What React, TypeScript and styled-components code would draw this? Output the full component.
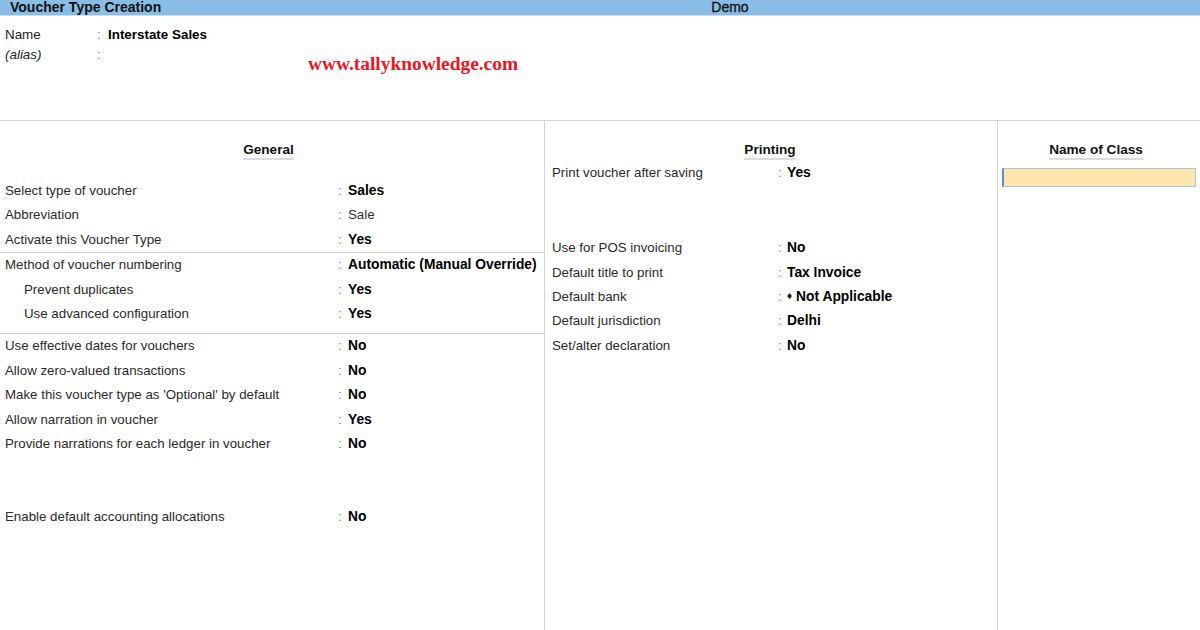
import styled, { createGlobalStyle } from 'styled-components';

const ROW = 24.4;

const GlobalStyle = createGlobalStyle`
  html, body {
    margin: 0;
    padding: 0;
    background: #fff;
  }
  body {
    font-family: "Liberation Sans", Arial, sans-serif;
    color: #222;
  }
`;

const Page = styled.div`
  width: 1200px;
  height: 630px;
  overflow: hidden;
  display: flex;
  flex-direction: column;
  position: relative;
`;

const TitleBar = styled.div`
  height: 15px;
  background: #88bde6;
  border-bottom: 1px solid #c4dff4;
  display: grid;
  grid-template-columns: 260px 1fr;
  align-items: center;
  font-size: 14px;
  line-height: 15px;
  font-weight: bold;
  color: #111;
`;

const Title = styled.div`
  padding-left: 10px;
`;

const Company = styled.div`
  text-align: center;
  font-weight: normal;
  -webkit-text-stroke: 0.3px #111;
`;

const Top = styled.div`
  height: 105px;
  border-bottom: 1px solid #d4d4d4;
  padding-top: 8px;
  box-sizing: border-box;
  position: relative;
`;

const TopRow = styled.div`
  display: grid;
  grid-template-columns: 92px 11px 1fr;
  height: 20px;
  align-items: center;
  font-size: 13.4px;
  padding-left: 5px;
`;

const TopLabel = styled.span<{ $italic?: boolean }>`
  font-style: ${(p) => (p.$italic ? 'italic' : 'normal')};
  color: #222;
`;

const Colon = styled.span`
  color: #888;
`;

const TopValue = styled.span`
  font-weight: bold;
  color: #000;
`;

const Watermark = styled.div`
  position: absolute;
  left: 308px;
  top: 37px;
  font-family: "Liberation Serif", "Times New Roman", serif;
  font-weight: bold;
  font-size: 19.4px;
  color: #f0141e;
`;

const Body = styled.div`
  flex: 1;
  display: grid;
  grid-template-columns: 544px 453px 1fr;
`;

const Column = styled.div<{ $divider?: boolean; $pad?: number; $top?: number }>`
  border-left: ${(p) => (p.$divider ? '1px solid #d4d4d4' : 'none')};
  padding-top: ${(p) => p.$top ?? 15}px;
  padding-left: ${(p) => p.$pad ?? 0}px;
  font-size: 13.3px;
`;

const Heading = styled.div<{ $gap?: number; $shift?: number }>`
  height: ${ROW}px;
  box-sizing: border-box;
  padding-top: 6px;
  padding-right: ${(p) => p.$shift ?? 0}px;
  display: flex;
  justify-content: center;
  align-items: center;
  margin-bottom: ${(p) => p.$gap ?? 0}px;
`;

const HeadingText = styled.span`
  font-weight: bold;
  font-size: 13.6px;
  color: #111;
  line-height: 16px;
  border-bottom: 2px solid #dcdcdc;
`;

const Group = styled.div<{ $line?: boolean; $bottom?: number }>`
  border-bottom: ${(p) => (p.$line ? '1px solid #cfcfcf' : 'none')};
  padding-bottom: ${(p) => p.$bottom ?? 0}px;
`;

const Row = styled.div<{ $label: number; $indent?: boolean; $colon: number }>`
  display: grid;
  grid-template-columns: ${(p) => p.$label}px ${(p) => p.$colon}px 1fr;
  height: ${ROW}px;
  align-items: center;
  white-space: nowrap;
  & > span:first-child {
    padding-left: ${(p) => (p.$indent ? 24 : 5)}px;
  }
`;

const Label = styled.span`
  color: #2a2a2a;
`;

const Value = styled.span<{ $plain?: boolean }>`
  font-weight: ${(p) => (p.$plain ? 'normal' : 'bold')};
  font-size: ${(p) => (p.$plain ? 13.3 : 13.8)}px;
  color: ${(p) => (p.$plain ? '#333' : '#000')};
`;

const Diamond = styled.span`
  font-size: 10px;
  margin-right: 4px;
  vertical-align: 2px;
`;

const Spacer = styled.div<{ $rows: number; $extra?: number }>`
  height: ${(p) => p.$rows * ROW + (p.$extra ?? 0)}px;
`;

const ClassInput = styled.div`
  margin: 8px 4px 0 4px;
  height: 17px;
  background: #fee6ad;
  border: 1px solid #a9c4e6;
  border-left: 2px solid #5b8fd0;
`;

type Item = { label: string; value: string; plain?: boolean; indent?: boolean };

const group1: Item[] = [
  { label: 'Select type of voucher', value: 'Sales' },
  { label: 'Abbreviation', value: 'Sale', plain: true },
  { label: 'Activate this Voucher Type', value: 'Yes' },
];

const group2: Item[] = [
  { label: 'Method of voucher numbering', value: 'Automatic (Manual Override)' },
  { label: 'Prevent duplicates', value: 'Yes', indent: true },
  { label: 'Use advanced configuration', value: 'Yes', indent: true },
];

const group3: Item[] = [
  { label: 'Use effective dates for vouchers', value: 'No' },
  { label: 'Allow zero-valued transactions', value: 'No' },
  { label: "Make this voucher type as 'Optional' by default", value: 'No' },
  { label: 'Allow narration in voucher', value: 'Yes' },
  { label: 'Provide narrations for each ledger in voucher', value: 'No' },
];

const printing: Item[] = [
  { label: 'Use for POS invoicing', value: 'No' },
  { label: 'Default title to print', value: 'Tax Invoice' },
  { label: 'Default bank', value: 'Not Applicable' },
  { label: 'Default jurisdiction', value: 'Delhi' },
  { label: 'Set/alter declaration', value: 'No' },
];

function LeftRow({ item }: { item: Item }) {
  return (
    <Row $label={338} $colon={10} $indent={item.indent}>
      <Label>{item.label}</Label>
      <Colon>:</Colon>
      <Value $plain={item.plain}>{item.value}</Value>
    </Row>
  );
}

function PrintRow({ item }: { item: Item }) {
  return (
    <Row $label={231} $colon={9}>
      <Label>{item.label}</Label>
      <Colon>:</Colon>
      <Value>
        {item.label === 'Default bank' && <Diamond>♦</Diamond>}
        {item.value}
      </Value>
    </Row>
  );
}

export default function App() {
  return (
    <Page>
      <GlobalStyle />
      <TitleBar>
        <Title>Voucher Type Creation</Title>
        <Company>Demo</Company>
      </TitleBar>
      <Top>
        <TopRow>
          <TopLabel>Name</TopLabel>
          <Colon>:</Colon>
          <TopValue>Interstate Sales</TopValue>
        </TopRow>
        <TopRow>
          <TopLabel $italic>(alias)</TopLabel>
          <Colon>:</Colon>
          <span />
        </TopRow>
        <Watermark>www.tallyknowledge.com</Watermark>
      </Top>
      <Body>
        <Column>
          <Heading $gap={18} $shift={7}>
            <HeadingText>General</HeadingText>
          </Heading>
          <Group $line>
            {group1.map((it) => (
              <LeftRow key={it.label} item={it} />
            ))}
          </Group>
          <Group $line $bottom={7}>
            {group2.map((it) => (
              <LeftRow key={it.label} item={it} />
            ))}
          </Group>
          <Group>
            {group3.map((it) => (
              <LeftRow key={it.label} item={it} />
            ))}
          </Group>
          <Spacer $rows={2} />
          <LeftRow item={{ label: 'Enable default accounting allocations', value: 'No' }} />
        </Column>
        <Column $divider $pad={2} $top={15}>
          <Heading $shift={4}>
            <HeadingText>Printing</HeadingText>
          </Heading>
          <PrintRow item={{ label: 'Print voucher after saving', value: 'Yes' }} />
          <Spacer $rows={2} $extra={2} />
          {printing.map((it) => (
            <PrintRow key={it.label} item={it} />
          ))}
        </Column>
        <Column $divider>
          <Heading $shift={6}>
            <HeadingText>Name of Class</HeadingText>
          </Heading>
          <ClassInput />
        </Column>
      </Body>
    </Page>
  );
}
